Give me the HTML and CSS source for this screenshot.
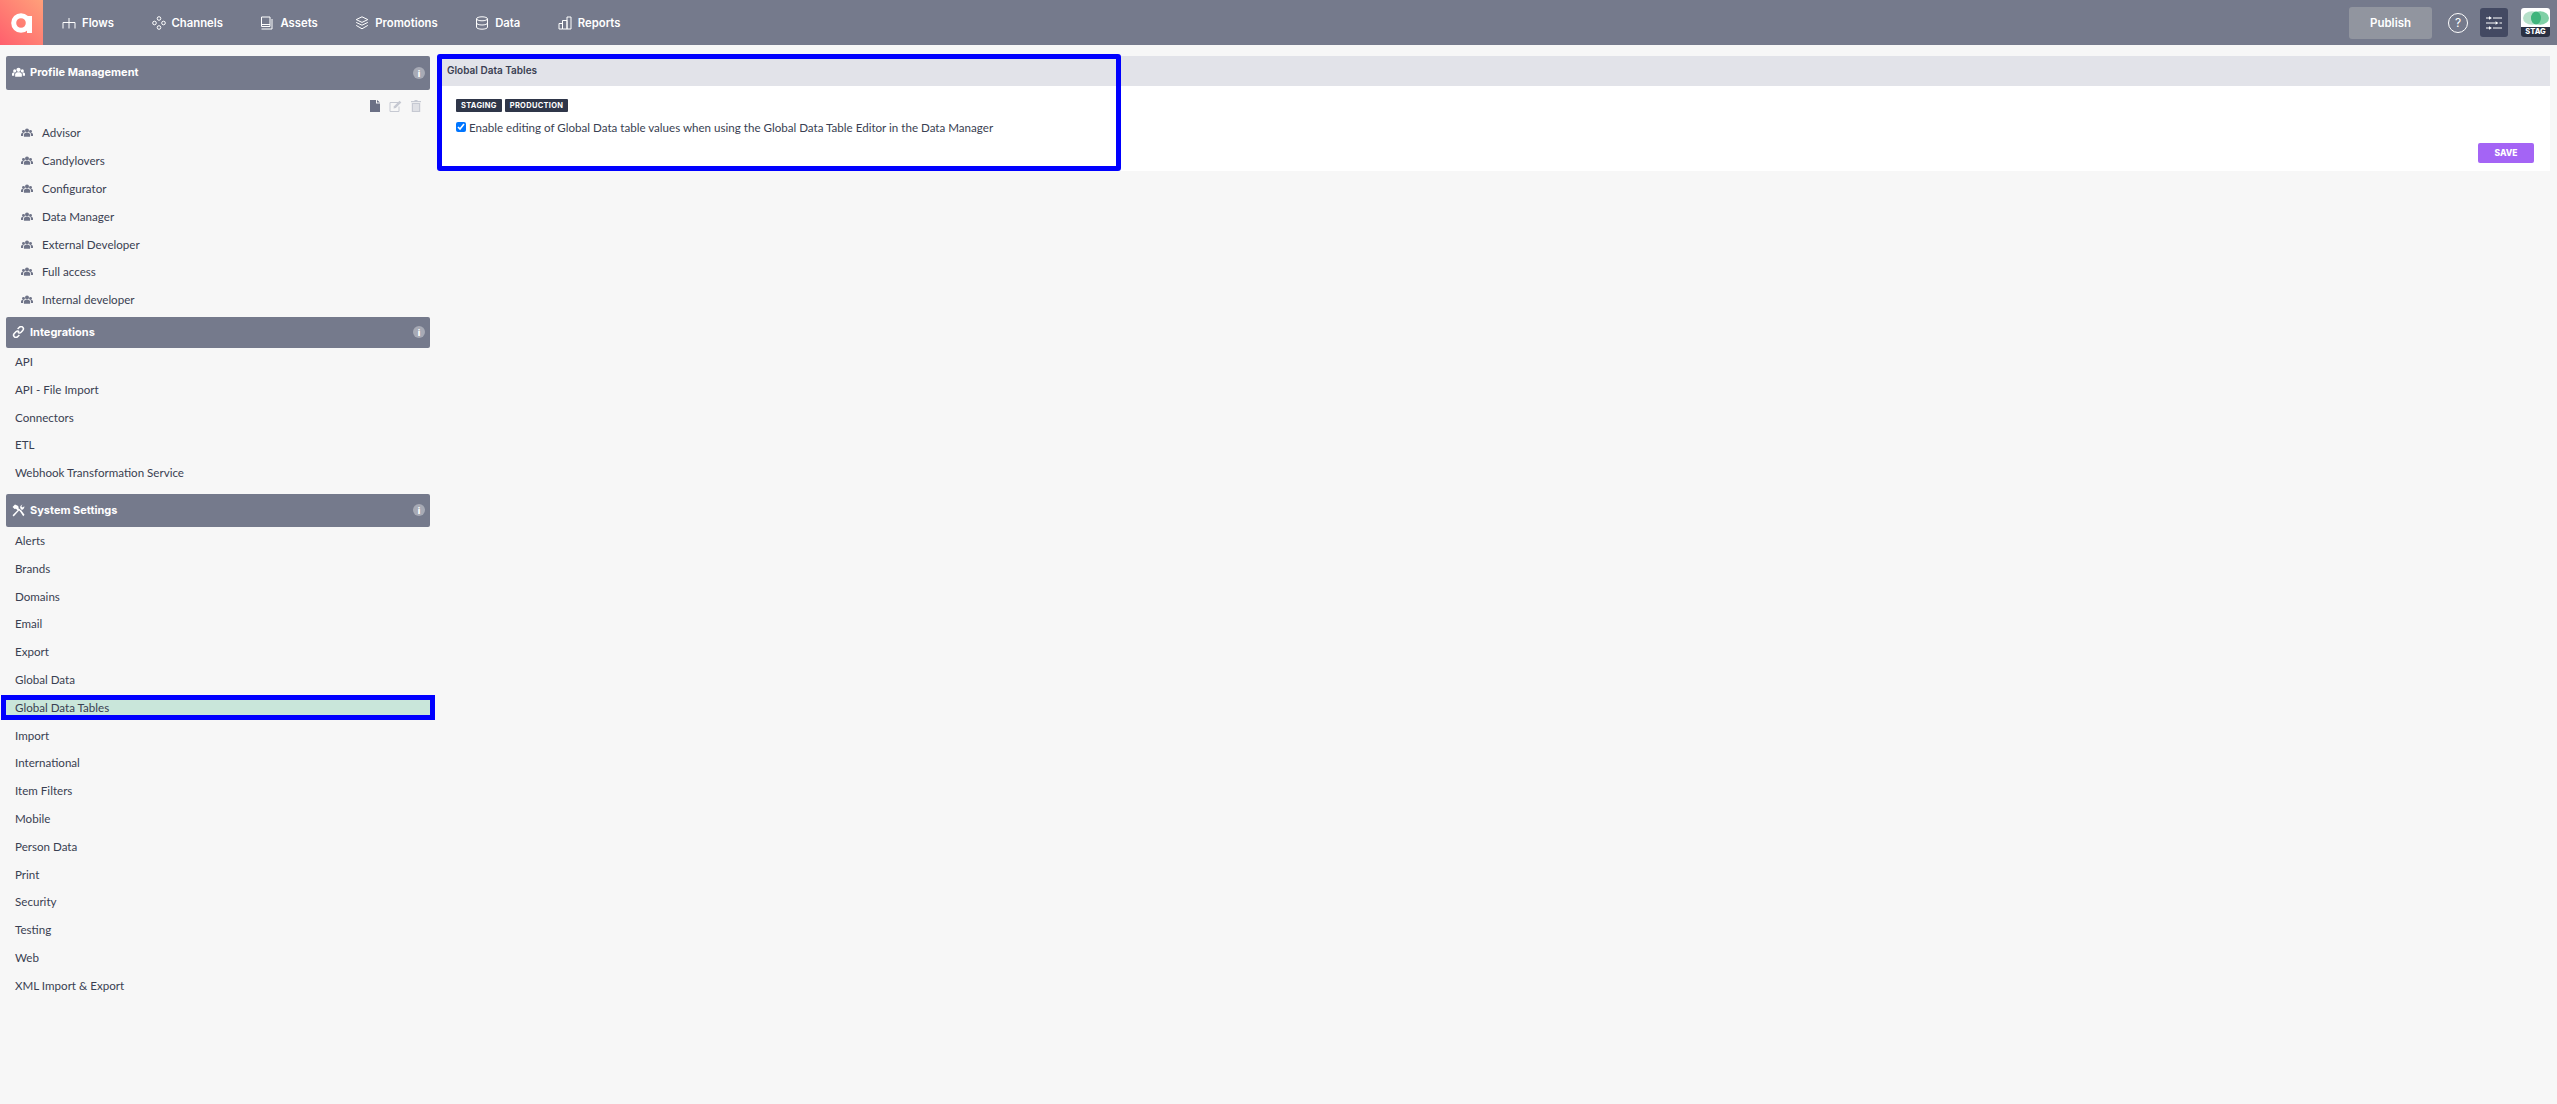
FILE: index.html
```html
<!DOCTYPE html>
<html lang="en">
<head>
<meta charset="utf-8">
<title>Global Data Tables</title>
<link rel="stylesheet" href="styles.css">
</head>
<body>
<svg class="defs" width="0" height="0" aria-hidden="true">
  <symbol id="people" viewBox="0 0 14 10">
    <circle cx="7" cy="2.600" r="2.300"/><circle cx="2.900" cy="3.800" r="1.700"/><circle cx="11.100" cy="3.800" r="1.700"/>
    <path d="M3.400 10V7.400C3.400 5.900 5 5.200 7 5.200s3.600.7 3.600 2.200V10z"/>
    <path d="M0 9V7.200C0 6 1 5.600 2.800 5.600l.2 0c-.5.5-.6 1.200-.6 2V9z"/>
    <path d="M14 9V7.200c0-1.200-1-1.600-2.800-1.600l-.2 0c.5.5.6 1.200.6 2V9z"/>
  </symbol>
</svg>

<header class="topbar">
  <a class="logo"><svg class="logo-a" viewBox="0 0 22 20"><circle cx="10" cy="10" r="7.300"/><path d="M18.500 3v17"/></svg></a>
  <nav class="nav">
    <a class="nav-item"><svg class="nav-ic" viewBox="0 0 14 14"><path d="M1 12.500V6.500h12v6M7 2v10.500"/></svg>Flows</a>
    <a class="nav-item"><svg class="nav-ic" viewBox="0 0 14 14"><circle cx="7" cy="2.500" r="1.800"/><circle cx="7" cy="11.500" r="1.800"/><circle cx="2.500" cy="7" r="1.800"/><circle cx="11.500" cy="7" r="1.800"/></svg>Channels</a>
    <a class="nav-item"><svg class="nav-ic" viewBox="0 0 14 14"><path d="M1.500 1h8.500v9.500H1.500zM1.500 13h10.500V3M1.500 8.500h8.500"/></svg>Assets</a>
    <a class="nav-item"><svg class="nav-ic" viewBox="0 0 14 14"><path d="M7 .8l5.800 2.800L7 6.400 1.200 3.600zM1.200 6.400L7 9.200l5.800-2.800M1.200 9.400L7 12.800l5.800-3.400"/></svg>Promotions</a>
    <a class="nav-item"><svg class="nav-ic" viewBox="0 0 14 14"><ellipse cx="7" cy="2.800" rx="5.500" ry="2"/><path d="M1.500 2.800v8.400c0 1.100 2.500 2 5.500 2s5.500-.9 5.500-2V2.800M1.500 7c0 1.100 2.500 2 5.500 2s5.500-.9 5.500-2"/></svg>Data</a>
    <a class="nav-item"><svg class="nav-ic" viewBox="0 0 14 14"><path d="M1 7.500h3.500V13H1zM4.500 4.500H9V13H4.500zM9 1h4v12H9z"/></svg>Reports</a>
  </nav>
  <div class="top-actions">
    <button class="publish">Publish</button>
    <span class="help">?</span>
    <span class="tune">
      <svg viewBox="0 0 16 14"><path d="M0 2h3M7 2h9M0 7h9.500M13.500 7H16M0 12h3M7 12h9"/><path class="knob" d="M3 .2v3.600l3-1.800zM9.500 5.200v3.600l3-1.800zM3 10.200v3.600l3-1.800z"/></svg>
    </span>
    <span class="stag">
      <span class="stag-top"><svg viewBox="0 0 26 14"><ellipse cx="9" cy="7" rx="9" ry="6.800" class="c1"/><ellipse cx="17" cy="7" rx="9" ry="6.800" class="c2"/><ellipse cx="13" cy="7" rx="5" ry="6.500" class="c3"/></svg></span>
      <span class="stag-label">STAG</span>
    </span>
  </div>
</header>

<div class="page">
  <aside class="sidebar">
    <div class="sec-head sec-profile">
      <svg class="sec-ic"><use href="#people"/></svg>
      <span class="sec-title">Profile Management</span>
      <span class="info">i</span>
    </div>
    <div class="tools">
      <svg class="tool tool-file" viewBox="0 0 10 12"><path d="M0 0h6v3.500h4V12H0zM7 0l3 2.600H7z"/></svg>
      <svg class="tool tool-edit" viewBox="0 0 13 12"><path class="out" d="M9 2.500H1v9h9V6.500"/><path d="M4.500 8.500l.5-2.300L10.500.7l1.800 1.800L6.800 8z"/></svg>
      <svg class="tool tool-trash" viewBox="0 0 10 12"><path d="M3.500 0h3v1H10v1.200H0V1h3.500zM.8 3h8.400v9H.8zM2.500 4v7h1V4zM4.500 4v7h1V4zM6.500 4v7h1V4z" fill-rule="evenodd"/></svg>
    </div>
    <ul class="list list-icons">
      <li class="row"><svg class="row-ic"><use href="#people"/></svg>Advisor</li>
      <li class="row"><svg class="row-ic"><use href="#people"/></svg>Candylovers</li>
      <li class="row"><svg class="row-ic"><use href="#people"/></svg>Configurator</li>
      <li class="row"><svg class="row-ic"><use href="#people"/></svg>Data Manager</li>
      <li class="row"><svg class="row-ic"><use href="#people"/></svg>External Developer</li>
      <li class="row"><svg class="row-ic"><use href="#people"/></svg>Full access</li>
      <li class="row"><svg class="row-ic"><use href="#people"/></svg>Internal developer</li>
    </ul>
    <div class="sec-head sec-integrations">
      <svg class="sec-ic" viewBox="0 0 14 14"><g fill="none" stroke="#fff" stroke-width="1.800"><path d="M6 3.500l2-2c1.200-1 2.900-1 3.900 0s1 2.700 0 3.800L10 7.300c-1.100 1-2.800 1-3.800 0"/><path d="M8 10.500l-2 2c-1.200 1-2.900 1-3.900 0s-1-2.700 0-3.800L4 6.700c1.100-1 2.800-1 3.800 0"/></g></svg>
      <span class="sec-title">Integrations</span>
      <span class="info">i</span>
    </div>
    <ul class="list">
      <li class="row">API</li>
      <li class="row">API - File Import</li>
      <li class="row">Connectors</li>
      <li class="row">ETL</li>
      <li class="row">Webhook Transformation Service</li>
    </ul>
    <div class="sec-head sec-system">
      <svg class="sec-ic sec-ic-tools" viewBox="0 0 14 14"><path d="M1.800 13.400L.6 12.200 6 6.800 4.200 5 2.800 5.400.6 3.200 3.200.6l3 1.200 1.200 1.600-.8.900L8.800 6l.8 1.400-.8.800-1.200-1.200z"/><path d="M8.200 7.400l1.300-1.300 4 5.600-1.400 1.500zM9 4.600c-.6-1.600.2-3.300 1.800-3.900l.5-.2-1.300 2 1.500 1.300 1.700-1.500c.3 1.300-.2 2.900-1.400 3.500-.8.400-1.500.3-1.900.2z"/></svg>
      <span class="sec-title">System Settings</span>
      <span class="info">i</span>
    </div>
    <ul class="list">
      <li class="row">Alerts</li>
      <li class="row">Brands</li>
      <li class="row">Domains</li>
      <li class="row">Email</li>
      <li class="row">Export</li>
      <li class="row">Global Data</li>
      <li class="row row-selected">Global Data Tables</li>
      <li class="row">Import</li>
      <li class="row">International</li>
      <li class="row">Item Filters</li>
      <li class="row">Mobile</li>
      <li class="row">Person Data</li>
      <li class="row">Print</li>
      <li class="row">Security</li>
      <li class="row">Testing</li>
      <li class="row">Web</li>
      <li class="row">XML Import &amp; Export</li>
    </ul>
  </aside>

  <main class="content">
    <section class="panel">
      <h2 class="panel-head">Global Data Tables</h2>
      <div class="panel-body">
        <div class="badges"><span class="badge">STAGING</span><span class="badge">PRODUCTION</span></div>
        <label class="check"><input type="checkbox" checked>Enable editing of Global Data table values when using the Global Data Table Editor in the Data Manager</label>
        <div class="panel-foot"><button class="save">SAVE</button></div>
      </div>
      <div class="highlight"></div>
    </section>
  </main>
</div>
</body>
</html>
```
FILE: styles.css
```css
* { box-sizing: border-box; }
html, body { margin: 0; padding: 0; }
body {
  width: 2557px;
  height: 1104px;
  overflow: hidden;
  background: #f7f7f7;
  color: #3a3f52;
  font-family: Lato, "Open Sans", sans-serif;
  font-size: 11.600px;
}
.defs { position: absolute; }

/* top bar */
.topbar {
  display: flex;
  align-items: center;
  height: 45px;
  background: #757a8c;
  color: #fff;
}
.logo {
  display: flex;
  align-items: center;
  justify-content: center;
  width: 43px;
  height: 45px;
  background: linear-gradient(45deg, #ff5f6d 0%, #ffa07a 100%);
}
.logo-a {
  width: 22px;
  height: 20px;
  fill: none;
  stroke: #fff;
  stroke-width: 5;
}
.nav { display: flex; align-items: center; gap: 37.500px; margin-left: 19px; }
.nav-item {
  display: flex;
  align-items: center;
  font-family: Inter, sans-serif;
  font-weight: 600;
  font-size: 11.300px;
  color: #fff;
}
.nav-ic {
  width: 14px;
  height: 14px;
  margin-right: 6px;
  fill: none;
  stroke: #fff;
  stroke-width: 1;
}
.top-actions {
  margin-left: auto;
  margin-right: 7px;
  display: flex;
  align-items: center;
}
.publish {
  width: 83px;
  height: 32px;
  border: 0;
  border-radius: 3px;
  background: #91959f;
  color: #fff;
  font-family: Inter, sans-serif;
  font-weight: 600;
  font-size: 11.500px;
}
.help {
  display: flex;
  align-items: center;
  justify-content: center;
  width: 20px;
  height: 20px;
  margin-left: 16px;
  border: 1px solid #fff;
  border-radius: 50%;
  font-family: Inter, sans-serif;
  font-size: 12px;
}
.tune {
  display: flex;
  align-items: center;
  justify-content: center;
  width: 28px;
  height: 29px;
  margin-left: 12px;
  border-radius: 3px;
  background: #434962;
}
.tune svg { width: 16px; height: 14px; fill: none; stroke: #fff; stroke-width: 1; }
.tune .knob { fill: #fff; stroke: none; }
.stag {
  display: flex;
  flex-direction: column;
  width: 29px;
  height: 29px;
  margin-left: 13px;
  border-radius: 3px;
  overflow: hidden;
}
.stag-top {
  display: flex;
  align-items: center;
  justify-content: center;
  height: 19px;
  background: #fff;
}
.stag-top svg { width: 26px; height: 14px; }
.c1 { fill: #b5e0c9; }
.c2 { fill: #7fd0a6; }
.c3 { fill: #3fb47c; }
.stag-label {
  height: 10px;
  background: #2a3042;
  font-family: Inter, sans-serif;
  font-weight: 800;
  font-size: 7.500px;
  line-height: 10px;
  text-align: center;
  color: #fff;
}

/* page */
.page {
  display: flex;
  align-items: flex-start;
  padding: 11px 7px 0 6px;
}
.sidebar { width: 424px; flex: none; }
.sec-head {
  display: flex;
  align-items: center;
  border-radius: 2px;
  background: #757a8c;
  color: #fff;
  padding: 0 5px 0 6px;
}
.sec-profile { height: 34px; padding-bottom: 3px; }
.sec-integrations { height: 31px; margin-top: 3px; }
.sec-system { height: 33px; margin-top: 7px; }
.sec-ic { width: 13px; height: 12px; margin-right: 5px; fill: #fff; flex: none; }
.sec-ic-tools { height: 13px; }
.sec-title {
  font-family: Inter, sans-serif;
  font-weight: 700;
  font-size: 11px;
}
.info {
  display: flex;
  align-items: center;
  justify-content: center;
  width: 12px;
  height: 12px;
  margin-left: auto;
  border-radius: 50%;
  background: #a7aab5;
  color: #fff;
  font-family: Inter, sans-serif;
  font-weight: 800;
  font-size: 9px;
}
.sec-profile .info { margin-top: 3px; }
.tools {
  display: flex;
  align-items: center;
  justify-content: flex-end;
  height: 29px;
  padding: 2px 9px 0 0;
}
.tool { height: 12px; }
.tool-file { width: 10px; fill: #6b7085; }
.tool-edit { width: 13px; margin-left: 9px; fill: #c6c9d2; }
.tool-edit .out { fill: none; stroke: #c6c9d2; }
.tool-trash { width: 10px; margin-left: 9px; fill: #c6c9d2; }
.list { list-style: none; margin: 0; padding: 0; }
.row {
  display: flex;
  align-items: center;
  height: 27.800px;
  padding-left: 9px;
  color: #3a3f52;
}
.list-icons .row { padding-left: 15px; }
.row-ic { width: 12px; height: 9px; margin-right: 9px; fill: #6f7488; flex: none; }
.row-selected {
  background: #c9e6da;
  outline: 5px solid #0000ff;
  outline-offset: -0.500px;
  height: 15px;
  margin: 6.400px 0;
}

/* main */
.content { flex: 1; margin-left: 8px; }
.panel { position: relative; background: #fff; }
.panel-head {
  height: 30px;
  margin: 0;
  padding-left: 9px;
  background: #e2e3e9;
  color: #3a3f52;
  font-family: Inter, sans-serif;
  font-weight: 600;
  font-size: 10px;
  line-height: 29px;
}
.panel-body { padding: 13px 16px 8px 18px; height: 85px; }
.badges { display: flex; gap: 3px; }
.badge {
  height: 13px;
  padding: 0 5px;
  border-radius: 1px;
  background: #2f3649;
  color: #fff;
  font-family: Inter, sans-serif;
  font-weight: 700;
  font-size: 7.500px;
  letter-spacing: .300px;
  line-height: 13px;
}
.check {
  display: flex;
  align-items: center;
  height: 16px;
  margin-top: 7px;
}
.check input { width: 10px; height: 10px; margin: 0 3px 0 0; accent-color: #0075ff; }
.panel-foot { display: flex; justify-content: flex-end; margin-top: 8px; }
.save {
  width: 56px;
  height: 20px;
  padding: 0;
  border: 0;
  border-radius: 2px;
  background: #a464f5;
  color: #fff;
  font-family: Inter, sans-serif;
  font-weight: 800;
  font-size: 8.500px;
}
.highlight {
  position: absolute;
  left: -1px;
  top: -2px;
  width: 684px;
  height: 117px;
  border: 5px solid #0000ff;
  border-radius: 3px;
}
```
